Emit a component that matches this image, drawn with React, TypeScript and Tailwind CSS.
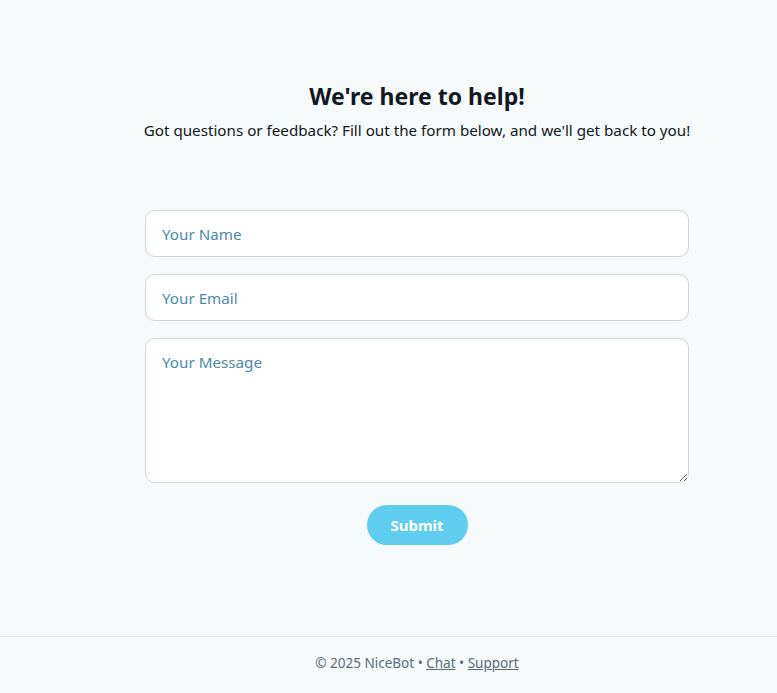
export default function App() {
  return (
    <div
      className="min-h-[693px] flex flex-col bg-[#f7fafb] text-[#111820]"
      style={{ fontFamily: '"Noto Sans", "Open Sans", sans-serif' }}
    >
      <main className="flex-1 pl-[57px]">
        <div className="mx-auto w-[544px] pt-[80px]">
          {/* Header */}
          <section className="text-center">
            <h1 className="text-[23px] leading-[32px] font-bold">We're here to help!</h1>
            <p className="mt-[7px] text-[15.2px] leading-[22px] whitespace-nowrap -mx-4">
              Got questions or feedback? Fill out the form below, and we'll get back to you!
            </p>
          </section>

          {/* Contact form */}
          <form className="mt-[69px] flex flex-col gap-[17px]" onSubmit={(e) => e.preventDefault()}>
            <input
              type="text"
              placeholder="Your Name"
              className="h-[47px] w-full rounded-[10px] border border-[#cfd6dc] bg-white px-4 text-[15.2px] placeholder:text-[#4c8aa8] outline-none"
            />
            <input
              type="email"
              placeholder="Your Email"
              className="h-[47px] w-full rounded-[10px] border border-[#cfd6dc] bg-white px-4 text-[15.2px] placeholder:text-[#4c8aa8] outline-none"
            />
            <textarea
              placeholder="Your Message"
              className="h-[145px] w-full rounded-[10px] border border-[#cfd6dc] bg-white px-4 py-[12px] text-[15.2px] leading-[22px] placeholder:text-[#4c8aa8] outline-none"
            />
            <div className="mt-[5px] flex justify-center">
              <button
                type="submit"
                className="h-[40px] w-[101px] rounded-full bg-[#5fcdee] text-[15px] font-bold text-white"
              >
                Submit
              </button>
            </div>
          </form>
        </div>
      </main>

      {/* Footer */}
      <footer className="h-[57px] border-t border-[#e1e7eb] flex items-center justify-center pl-[57px] pb-[3px] text-[13.5px] text-[#5b6b78]">
        <span>
          © 2025 NiceBot •{" "}
          <a href="#" className="underline">Chat</a> •{" "}
          <a href="#" className="underline">Support</a>
        </span>
      </footer>
    </div>
  );
}
